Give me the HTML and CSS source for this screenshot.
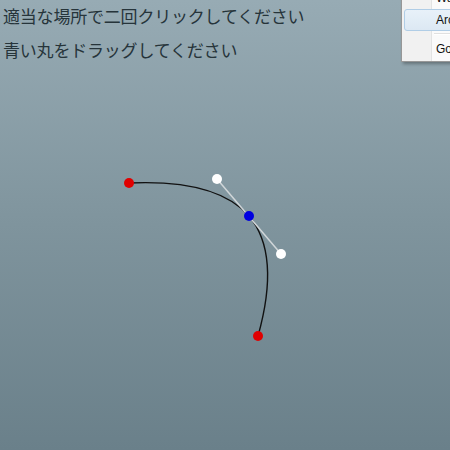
FILE: index.html
```html
<!DOCTYPE html>
<html lang="ja">
<head>
<meta charset="utf-8">
<link rel="stylesheet" href="styles.css">
</head>
<body>
<div class="stage">
  <div class="msgs">
    <p class="msg">適当な場所で二回クリックしてください</p>
    <p class="msg">青い丸をドラッグしてください</p>
  </div>
  <svg class="canvas" width="450" height="450" viewBox="0 0 450 450">
    <path d="M129 183 Q217 179 249 216 Q281 254 258 336" fill="none" stroke="#111" stroke-width="1.4"/>
    <line x1="217" y1="179" x2="281" y2="254" stroke="#d0d6d9" stroke-width="1.5"/>
    <circle cx="129" cy="183" r="5" fill="#e00000"/>
    <circle cx="258" cy="336" r="5" fill="#e00000"/>
    <circle cx="217" cy="179" r="5" fill="#ffffff"/>
    <circle cx="281" cy="254" r="5" fill="#ffffff"/>
    <circle cx="249" cy="216" r="5" fill="#0000e0"/>
  </svg>
  <div class="menu">
    <div class="item">Wave</div>
    <div class="item active">Arc</div>
    <div class="sep"></div>
    <div class="item">Go</div>
  </div>
</div>
</body>
</html>
```
FILE: styles.css
```css
html, body {
  margin: 0;
  padding: 0;
}
.stage {
  position: relative;
  width: 450px;
  height: 450px;
  overflow: hidden;
  background: linear-gradient(to bottom, #97abb4 0%, #7f949d 50%, #6a808a 100%);
  font-family: "Noto Sans CJK JP", "Noto Sans", sans-serif;
}
.msgs {
  display: flex;
  flex-direction: column;
  gap: 12px;
  padding: 5px 0 0 3px;
}
.msg {
  margin: 0;
  font-size: 17px;
  line-height: 22px;
  color: #26343a;
  letter-spacing: -0.2px;
}
.canvas {
  position: absolute;
  left: 0;
  top: 0;
}
.menu {
  position: absolute;
  left: 401px;
  top: -16px;
  width: 90px;
  height: 78px;
  background: linear-gradient(to right, #f1f1f1 0 29px, #e2e3e3 29px 30px, #fafafa 30px);
  border: 1px solid #979797;
  box-shadow: 2px 2px 3px rgba(0,0,0,0.3);
  padding: 2px;
  box-sizing: border-box;
  font-family: "Liberation Sans", Arial, sans-serif;
  font-size: 12px;
  color: #111;
}
.item {
  height: 20px;
  line-height: 20px;
  padding-left: 31px;
  border: 1px solid transparent;
  border-radius: 3px;
}
.item.active {
  background: linear-gradient(to bottom, #e8f1f9, #dce8f3);
  border-color: #b0cde6;
}
.sep {
  height: 1px;
  margin: 2px 0 3px 30px;
  background: #e0e0e0;
  border-bottom: 1px solid #fff;
}
```
